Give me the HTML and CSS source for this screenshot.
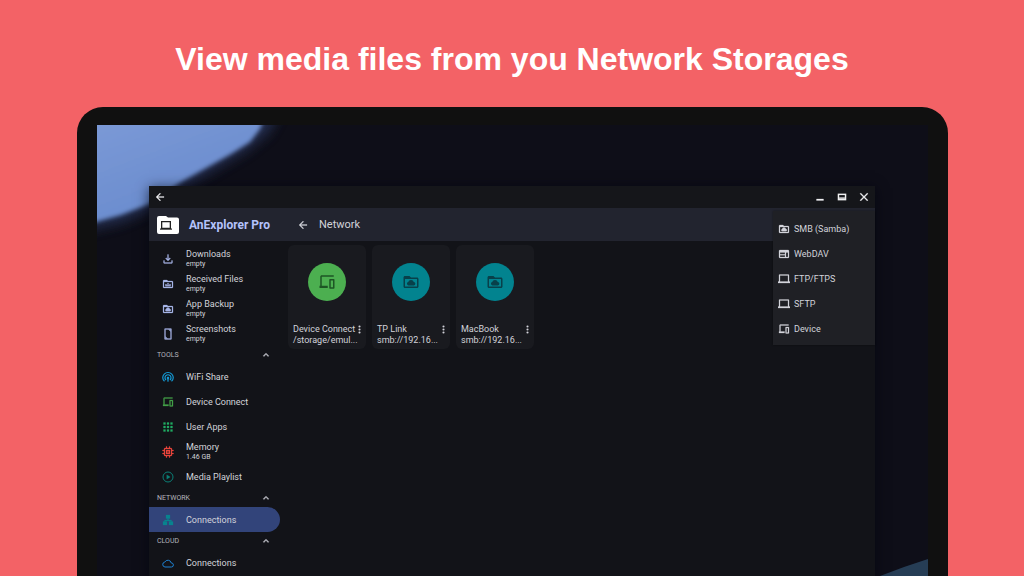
FILE: index.html
```
<!DOCTYPE html>
<html lang="en">
<head>
  <meta charset="UTF-8" />
  <meta name="viewport" content="width=device-width, initial-scale=1" />
  <title>AnExplorer Pro - Network Storages</title>
  <link rel="stylesheet" href="styles.css">
</head>
<body>

  <!-- Icon set -->
  <svg class="sprite" aria-hidden="true">
    <symbol id="back" viewBox="0 0 24 24"><path d="M20 11H7.83l5.59-5.59L12 4l-8 8 8 8 1.41-1.41L7.83 13H20v-2z"/></symbol>
    <symbol id="download" viewBox="0 0 24 24"><path d="M3 15h2v4h14v-4h2v4c0 1.1-.9 2-2 2H5c-1.1 0-2-.9-2-2v-4zm9 1l5-5-1.4-1.4-2.6 2.6V3h-2v9.200l-2.600-2.600L7 11l5 5z"/></symbol>
    <symbol id="folder" viewBox="0 0 24 24"><path d="M20 6h-8l-2-2H4c-1.100 0-2 .9-2 2v12c0 1.100.9 2 2 2h16c1.100 0 2-.9 2-2V8c0-1.100-.9-2-2-2zm0 12H4V8h16v10z"/></symbol>
    <symbol id="folder-files" viewBox="0 0 24 24"><use href="#folder"/><path d="M7 12h2v4H7zM11 10h2v6h-2zM15 12h2v4h-2zM7 15h10v1.500H7z"/></symbol>
    <symbol id="folder-cloud" viewBox="0 0 24 24"><use href="#folder"/><path d="M8.500 16.500a2.300 2.300 0 0 1-.2-4.500A3.800 3.800 0 0 1 12 9.200a3.800 3.800 0 0 1 3.700 2.900 2.200 2.200 0 0 1-.2 4.400z"/></symbol>
    <symbol id="phone" viewBox="0 0 24 24"><path d="M18 1H6c-.6 0-1 .4-1 1v20c0 .6.4 1 1 1h12c.6 0 1-.4 1-1V2c0-.6-.4-1-1-1zm-1 20H7V3h10v18z"/><path d="M13 3h4v4zM7 17l4 4H7z"/></symbol>
    <symbol id="hotspot" viewBox="0 0 24 24"><path fill="none" stroke="currentColor" stroke-width="2.400" d="M5 20.500a10.500 10 0 1 1 14 0M8 18a6 6 0 1 1 8 0"/><circle cx="12" cy="14" r="2.300"/><path d="M11 14h2v7h-2z"/></symbol>
    <symbol id="devices" viewBox="0 0 24 24"><path d="M5 5h16V3H5c-1.100 0-2 .9-2 2v12H2v3h11v-3H5V5zm16 3h-5c-.6 0-1 .4-1 1v11c0 .6.4 1 1 1h5c.6 0 1-.4 1-1V9c0-.6-.4-1-1-1zm-1 11h-3v-9h3v9z"/></symbol>
    <symbol id="apps" viewBox="0 0 24 24"><path d="M3 3h4v4H3zM10 3h4v4h-4zM17 3h4v4h-4zM3 10h4v4H3zM10 10h4v4h-4zM17 10h4v4h-4zM3 17h4v4H3zM10 17h4v4h-4zM17 17h4v4h-4z"/></symbol>
    <symbol id="memory" viewBox="0 0 24 24"><path d="M16 8H8v8h8V8zm-2.500 5.500h-3v-3h3v3zM23 10V8h-3V6c0-1.100-.9-2-2-2h-2V1h-2v3h-4V1H8v3H6c-1.100 0-2 .9-2 2v2H1v2h3v4H1v2h3v2c0 1.100.9 2 2 2h2v3h2v-3h4v3h2v-3h2c1.100 0 2-.9 2-2v-2h3v-2h-3v-4h3zm-5 8H6V6h12v12z"/></symbol>
    <symbol id="play" viewBox="0 0 24 24"><circle cx="12" cy="12" r="10" fill="none" stroke="currentColor" stroke-width="2"/><path d="M9.500 7.500v9l7-4.500z"/></symbol>
    <symbol id="hub" viewBox="0 0 24 24"><path d="M8 2h8v7h-3v3h6v3h3v7h-8v-7h3v-1H7v1h3v7H2v-7h3v-3h6V9H8z"/></symbol>
    <symbol id="cloud" viewBox="0 0 24 24"><path fill="none" stroke="currentColor" stroke-width="2" d="M6 20a5 5 0 0 1-.4-9.900A7 7 0 0 1 18.600 12 4 4 0 0 1 19 20z"/></symbol>
    <symbol id="web" viewBox="0 0 24 24"><path d="M20 4H4c-1.100 0-2 .9-2 2v12c0 1.100.9 2 2 2h16c1.100 0 2-.9 2-2V6c0-1.100-.9-2-2-2zm-6 14H4v-3.500h10V18zm0-5.500H4V9h10v3.500zM20 18h-4V9h4v9z"/></symbol>
    <symbol id="laptop" viewBox="0 0 24 24"><path d="M22 17V4c0-.6-.4-1-1-1H3c-.6 0-1 .4-1 1v13H0v3h24v-3h-2zM4 5h16v12H4V5z"/></symbol>
    <symbol id="up" viewBox="0 0 24 24"><path d="M12 7l-7 7 2 2 5-5 5 5 2-2z"/></symbol>
    <symbol id="more" viewBox="0 0 8 24"><circle cx="4" cy="4" r="2.800"/><circle cx="4" cy="12" r="2.800"/><circle cx="4" cy="20" r="2.800"/></symbol>
    <symbol id="minimize" viewBox="0 0 24 24"><path d="M5 16h14v3H5z"/></symbol>
    <symbol id="maximize" viewBox="0 0 24 24"><path d="M2 4h20v16H2V4zm3 3v6h14V7H5zm0 9v1h14v-1z"/></symbol>
    <symbol id="close" viewBox="0 0 24 24"><path d="M20 5.600L18.400 4 12 10.400 5.600 4 4 5.600l6.400 6.400L4 18.400 5.600 20l6.400-6.400 6.400 6.400 1.600-1.600-6.400-6.400z"/></symbol>
  </svg>

  <h1 class="headline">View media files from you Network Storages</h1>

  <div class="device">
    <div class="screen">
      <!-- Wallpaper shapes -->
      <svg class="wallpaper wallpaper-top" viewBox="0 0 200 130" aria-hidden="true">
        <defs>
          <linearGradient id="sky" x1="0" y1="0" x2="0.6" y2="1">
            <stop offset="0" stop-color="#7f9cd8"/>
            <stop offset="1" stop-color="#6689cc"/>
          </linearGradient>
          <filter id="soft" x="-20%" y="-20%" width="140%" height="140%"><feGaussianBlur stdDeviation="6"/></filter>
          <filter id="edge" x="-20%" y="-20%" width="140%" height="140%"><feGaussianBlur stdDeviation="2"/></filter>
        </defs>
        <path d="M-20-20H186L172 8 150 26 86 64 52 86 24 98-20 108z" fill="#2b3861" opacity=".7" filter="url(#soft)"/>
        <path d="M-20-20H172L163 4 153 17 134 29 84 57 52 79 24 90-20 102z" fill="url(#sky)" filter="url(#edge)"/>
      </svg>
      <svg class="wallpaper wallpaper-bottom" viewBox="0 0 60 20" aria-hidden="true">
        <path d="M60 3L36 11 12 20H60z" fill="#263d55"/>
      </svg>

      <div class="window">
        <div class="title-bar">
          <button class="icon-button" aria-label="Back"><svg class="icon"><use href="#back"/></svg></button>
          <div class="window-buttons">
            <button class="icon-button" aria-label="Minimize"><svg class="icon"><use href="#minimize"/></svg></button>
            <button class="icon-button" aria-label="Maximize"><svg class="icon icon-small"><use href="#maximize"/></svg></button>
            <button class="icon-button" aria-label="Close"><svg class="icon"><use href="#close"/></svg></button>
          </div>
        </div>

        <header class="app-bar">
          <div class="brand">
            <svg class="logo" viewBox="0 0 22 18" aria-hidden="true">
              <path d="M2 0h7l2 1.500h9a2 2 0 0 1 2 2V16a2 2 0 0 1-2 2H2a2 2 0 0 1-2-2V2a2 2 0 0 1 2-2z" fill="#fff"/>
              <path d="M4 5h10v8H4zM5.300 6.300v5.400h7.400V6.300z" fill="#222" fill-rule="evenodd"/>
              <path d="M3 12.500h12v1.200H3z" fill="#222"/>
            </svg>
            <span class="brand-name">AnExplorer Pro</span>
          </div>
          <button class="icon-button" aria-label="Go up"><svg class="icon"><use href="#back"/></svg></button>
          <h2>Network</h2>
        </header>

        <div class="content">
          <nav class="sidebar">
            <a href="#" class="item"><svg class="icon lilac"><use href="#download"/></svg><span>Downloads<small>empty</small></span></a>
            <a href="#" class="item"><svg class="icon lilac"><use href="#folder-files"/></svg><span>Received Files<small>empty</small></span></a>
            <a href="#" class="item"><svg class="icon lilac"><use href="#folder-cloud"/></svg><span>App Backup<small>empty</small></span></a>
            <a href="#" class="item"><svg class="icon lilac"><use href="#phone"/></svg><span>Screenshots<small>empty</small></span></a>

            <button class="group">TOOLS<svg class="icon icon-small"><use href="#up"/></svg></button>
            <a href="#" class="item"><svg class="icon sky"><use href="#hotspot"/></svg><span>WiFi Share</span></a>
            <a href="#" class="item"><svg class="icon green"><use href="#devices"/></svg><span>Device Connect</span></a>
            <a href="#" class="item"><svg class="icon emerald"><use href="#apps"/></svg><span>User Apps</span></a>
            <a href="#" class="item"><svg class="icon red"><use href="#memory"/></svg><span>Memory<small>1.46 GB</small></span></a>
            <a href="#" class="item"><svg class="icon teal"><use href="#play"/></svg><span>Media Playlist</span></a>

            <button class="group">NETWORK<svg class="icon icon-small"><use href="#up"/></svg></button>
            <a href="#" class="item active"><svg class="icon cyan"><use href="#hub"/></svg><span>Connections</span></a>

            <button class="group">CLOUD<svg class="icon icon-small"><use href="#up"/></svg></button>
            <a href="#" class="item"><svg class="icon blue"><use href="#cloud"/></svg><span>Connections</span></a>
          </nav>

          <main class="cards">
            <article class="card">
              <div class="avatar avatar-green"><svg><use href="#devices"/></svg></div>
              <div class="card-title"><h3>Device Connect</h3><button class="more" aria-label="More"><svg><use href="#more"/></svg></button></div>
              <p>/storage/emul...</p>
            </article>
            <article class="card">
              <div class="avatar"><svg><use href="#folder-cloud"/></svg></div>
              <div class="card-title"><h3>TP Link</h3><button class="more" aria-label="More"><svg><use href="#more"/></svg></button></div>
              <p>smb://192.16...</p>
            </article>
            <article class="card">
              <div class="avatar"><svg><use href="#folder-cloud"/></svg></div>
              <div class="card-title"><h3>MacBook</h3><button class="more" aria-label="More"><svg><use href="#more"/></svg></button></div>
              <p>smb://192.16...</p>
            </article>
          </main>
        </div>

        <!-- Add connection menu -->
        <div class="menu">
          <button><svg class="icon"><use href="#folder-cloud"/></svg>SMB (Samba)</button>
          <button><svg class="icon"><use href="#web"/></svg>WebDAV</button>
          <button><svg class="icon"><use href="#laptop"/></svg>FTP/FTPS</button>
          <button><svg class="icon"><use href="#laptop"/></svg>SFTP</button>
          <button><svg class="icon"><use href="#devices"/></svg>Device</button>
        </div>
      </div>
    </div>
  </div>

</body>
</html>
```
FILE: styles.css
```
* {
  margin: 0;
  padding: 0;
  box-sizing: border-box;
}

body {
  display: flex;
  flex-direction: column;
  height: 100vh;
  overflow: hidden;
  background: #f36266;
  color: #d2d3da;
  font-family: Roboto, Arial, sans-serif;
  font-size: 9px;
}

button {
  border: none;
  background: none;
  color: inherit;
  font: inherit;
  cursor: pointer;
}

a {
  color: inherit;
  text-decoration: none;
}

svg {
  display: block;
  fill: currentColor;
}

.sprite {
  position: absolute;
  width: 0;
  height: 0;
}

.headline {
  padding: 39px 20px 28px;
  color: #fff;
  font-family: "Arial Rounded MT Bold", "Liberation Sans", Arial, sans-serif;
  font-size: 32px;
  line-height: 40px;
  text-align: center;
}

/* Device frame and desktop */
.device {
  display: flex;
  flex: 1;
  min-height: 0;
  margin: 0 76px 0 77px;
  padding: 18px 20px 0;
  border-radius: 26px 26px 0 0;
  background: #101010;
}

.screen {
  position: relative;
  display: flex;
  flex: 1;
  padding: 61px 53px 0 52px;
  overflow: hidden;
  background: #0e0e18;
}

.wallpaper {
  position: absolute;
}

.wallpaper-top {
  top: 0;
  left: 0;
  width: 200px;
}

.wallpaper-bottom {
  right: 0;
  bottom: 0;
  width: 60px;
}

/* App window */
.window {
  position: relative;
  display: flex;
  flex: 1;
  flex-direction: column;
  min-width: 0;
  background: #121318;
  box-shadow: 0 2px 12px rgba(3, 4, 14, 0.7);
}

.title-bar {
  display: flex;
  flex: none;
  align-items: center;
  justify-content: space-between;
  height: 22px;
  padding: 0 5px;
  background: #15161a;
  color: #f0f0f2;
}

.window-buttons {
  display: flex;
  gap: 10px;
}

.icon {
  flex: none;
  width: 12px;
  height: 12px;
  stroke: currentColor;
  stroke-width: 0.5;
}

.icon-small {
  width: 10px;
  height: 10px;
}

.icon-button {
  display: flex;
  align-items: center;
  justify-content: center;
  width: 12px;
  height: 12px;
}

.app-bar {
  display: flex;
  flex: none;
  align-items: center;
  height: 33px;
  background: #22242f;
}

.brand {
  display: flex;
  align-items: center;
  gap: 10px;
  width: 148px;
  padding-left: 8px;
}

.logo {
  width: 22px;
  height: 18px;
}

.brand-name {
  color: #b4c2fb;
  font-size: 12px;
  font-weight: 700;
}

.app-bar h2 {
  margin-left: 10px;
  font-size: 11px;
  font-weight: 400;
}

.content {
  display: flex;
  flex: 1;
  min-height: 0;
}

/* Sidebar */
.sidebar {
  flex: none;
  width: 131px;
  padding-top: 5px;
}

.item {
  display: flex;
  align-items: center;
  gap: 12px;
  height: 25px;
  padding-left: 13px;
  line-height: 10px;
}

.item small {
  display: block;
  font-size: 7px;
  line-height: 10px;
}

.item.active {
  border-radius: 0 13px 13px 0;
  background: #32447a;
}

.group {
  display: flex;
  align-items: center;
  justify-content: space-between;
  width: 100%;
  height: 18px;
  padding: 0 9px 0 8px;
  color: #b5b6bd;
  font-size: 7px;
}

.lilac { color: #a6b4e6; }
.sky { color: #149bd7; }
.green { color: #43a047; }
.emerald { color: #1fab62; }
.red { color: #e8453c; }
.teal { color: #0b8077; }
.cyan { color: #08838f; }
.blue { color: #1e82d2; }

/* Connection cards */
.cards {
  display: flex;
  flex: 1;
  align-items: flex-start;
  gap: 6px;
  padding: 4px 8px;
}

.card {
  width: 78px;
  padding: 18px 5px 3px;
  border-radius: 6px;
  background: #191a1f;
}

.avatar {
  display: flex;
  align-items: center;
  justify-content: center;
  width: 38px;
  height: 38px;
  margin: 0 auto 23px;
  border-radius: 50%;
  background: #02838f;
  color: #08404a;
}

.avatar-green {
  background: #4caf50;
  color: #1d5524;
}

.avatar svg {
  width: 18px;
  height: 18px;
}

.card-title {
  display: flex;
  align-items: center;
  justify-content: space-between;
  white-space: nowrap;
}

.card h3,
.card p {
  font-size: 9px;
  font-weight: 400;
  line-height: 11px;
}

.more {
  flex: none;
}

.more svg {
  width: 3px;
  height: 9px;
}

/* Drop-down menu over the app bar */
.menu {
  position: absolute;
  top: 25px;
  right: 0;
  width: 102px;
  padding: 5px 0 4px;
  background: #1f2025;
  box-shadow: 0 0 2px rgba(0, 0, 0, 0.4);
}

.menu button {
  display: flex;
  align-items: center;
  gap: 4px;
  width: 100%;
  height: 25px;
  padding-left: 5px;
}
```
